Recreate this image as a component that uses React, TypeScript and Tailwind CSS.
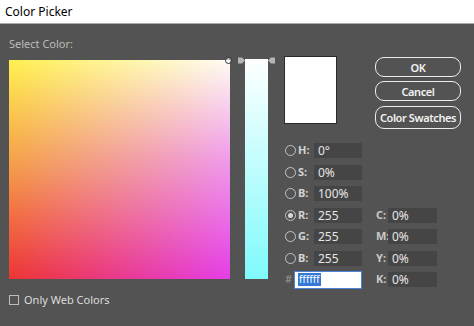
import React from "react";

const hsb = [
  { label: "H:", value: "0°" },
  { label: "S:", value: "0%" },
  { label: "B:", value: "100%" },
];

const rgbRows = [
  { label: "R:", value: "255", on: true, cmyk: "C:" },
  { label: "G:", value: "255", on: false, cmyk: "M:" },
  { label: "B:", value: "255", on: false, cmyk: "Y:" },
];

function Radio({ on }: { on?: boolean }) {
  return (
    <span className="w-[11px] h-[11px] rounded-full border-[1.5px] border-[#c4c4c4] flex items-center justify-center">
      {on && <span className="w-[5px] h-[5px] rounded-full bg-[#d8d8d8]" />}
    </span>
  );
}

function Field({ value, className = "" }: { value: string; className?: string }) {
  return (
    <div className={"h-[15px] bg-[#454545] text-[#e6e6e6] text-[12px] leading-[15px] pl-[4px] font-normal " + className}>
      {value}
    </div>
  );
}

function Arrow({ flip }: { flip?: boolean }) {
  return (
    <svg width="7" height="7" viewBox="0 0 7 7" className={flip ? "-scale-x-100" : ""}>
      <path d="M0 0.5 H4 L7 3.5 L4 6.5 H0 Z" fill="#b5b5b5" />
    </svg>
  );
}

const btn =
  "rounded-[9px] border-[1.5px] border-[#ececec] text-[11px] font-semibold text-[#f2f2f2] leading-none tracking-[-0.4px]";

export default function App() {
  return (
    <div className="w-[474px] h-[326px] bg-[#535353] font-['Noto_Sans',sans-serif] overflow-hidden select-none">
      {/* title bar */}
      <div className="h-[24px] bg-white border-b border-[#a9a9a9] flex items-center pl-[5px] text-[12px] text-black">
        Color Picker
      </div>

      <div className="pl-[9px]">
        <div className="pt-[13px] h-[32px] text-[11px] leading-[14px] text-[#bcbcbc]">Select Color:</div>

        <div className="flex items-start">
          {/* left: field + web colors */}
          <div className="mt-[4px] flex flex-col">
            <div className="relative w-[221px] h-[219px] bg-[linear-gradient(to_bottom,#fff04f,#f59a48_50%,#ee3434)]">
              <div className="absolute inset-0 bg-[linear-gradient(to_bottom,#fffbf4,#ef9cec_45%,#e43ee8)] [mask-image:linear-gradient(to_right,transparent,black)]" />
              <span className="absolute -right-[2px] -top-[3px] w-[7px] h-[7px] rounded-full border-[1.5px] border-[#2e2e2e] bg-white/60" />
            </div>
            <div className="mt-[15px] flex items-center gap-[5px]">
              <span className="w-[10px] h-[10px] border border-[#bdbdbd]" />
              <span className="text-[11px] leading-[12px] text-[#dcdcdc]">Only Web Colors</span>
            </div>
          </div>

          {/* hue strip */}
          <div className="relative ml-[15px] mt-[3px] w-[23px] h-[220px] bg-[linear-gradient(to_bottom,#ffffff,#7ffafb)]">
            <span className="absolute -left-[7px] -top-[2px] flex">
              <Arrow />
            </span>
            <span className="absolute -right-[7px] -top-[2px] flex">
              <Arrow flip />
            </span>
          </div>

          {/* right side */}
          <div className="ml-[16px] flex flex-col">
            <div className="flex items-start">
              <div className="w-[53px] h-[68px] bg-white border border-[#2b2b2b]" />
              <div className="ml-[38px] mt-[1px] flex flex-col gap-[4px] w-[86px]">
                <button className={"h-[20px] " + btn}>OK</button>
                <button className={"h-[20px] " + btn}>Cancel</button>
                <button className={"h-[23px] mt-[1px] " + btn}>Color Swatches</button>
              </div>
            </div>

            <div className="mt-[14px] flex flex-col gap-[6.5px] text-[11px] font-bold text-[#d4d4d4]">
              {hsb.map((r) => (
                <div key={r.label} className="flex items-center h-[15px]">
                  <span className="ml-[1px]"><Radio /></span>
                  <span className="w-[18px] pl-[2px]">{r.label}</span>
                  <Field value={r.value} className="w-[48px]" />
                </div>
              ))}
              {rgbRows.map((r) => (
                <div key={r.label} className="flex items-center h-[15px]">
                  <span className="ml-[1px]"><Radio on={r.on} /></span>
                  <span className="w-[18px] pl-[2px]">{r.label}</span>
                  <Field value={r.value} className="w-[48px]" />
                  <span className="ml-[14px] w-[12px] text-[#c8c8c8]">{r.cmyk}</span>
                  <Field value="0%" className="w-[49px]" />
                </div>
              ))}
              <div className="flex items-center h-[15px]">
                <span className="ml-[1px] w-[9px] text-[#9a9a9a] font-normal">#</span>
                <div className="w-[68px] h-[18px] bg-white border border-[#4a86d6] flex items-center pl-[3px]">
                  <span className="bg-[#3478d8] text-white text-[10px] leading-[13px] font-normal px-[1px]">ffffff</span>
                </div>
                <span className="ml-[14px] w-[12px] text-[#c8c8c8]">K:</span>
                <Field value="0%" className="w-[49px]" />
              </div>
            </div>
          </div>
        </div>
      </div>
    </div>
  );
}
